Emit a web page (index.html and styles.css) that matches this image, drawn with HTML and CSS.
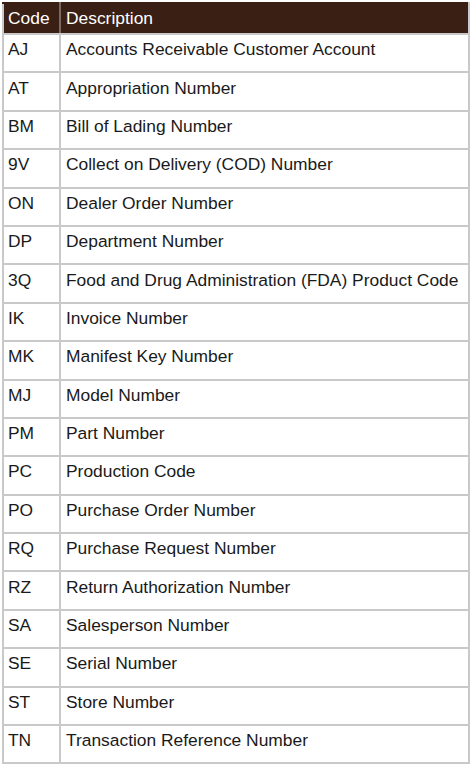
FILE: index.html
```html
<!DOCTYPE html>
<html>
<head>
<meta charset="utf-8">
<link rel="stylesheet" href="styles.css">
</head>
<body>
<table class="codes">
<thead>
<tr><th class="c">Code</th><th class="d">Description</th></tr>
</thead>
<tbody>
<tr><td class="c">AJ</td><td class="d">Accounts Receivable Customer Account</td></tr>
<tr><td class="c">AT</td><td class="d">Appropriation Number</td></tr>
<tr><td class="c">BM</td><td class="d">Bill of Lading Number</td></tr>
<tr><td class="c">9V</td><td class="d">Collect on Delivery (COD) Number</td></tr>
<tr><td class="c">ON</td><td class="d">Dealer Order Number</td></tr>
<tr><td class="c">DP</td><td class="d">Department Number</td></tr>
<tr><td class="c">3Q</td><td class="d">Food and Drug Administration (FDA) Product Code</td></tr>
<tr><td class="c">IK</td><td class="d">Invoice Number</td></tr>
<tr><td class="c">MK</td><td class="d">Manifest Key Number</td></tr>
<tr><td class="c">MJ</td><td class="d">Model Number</td></tr>
<tr><td class="c">PM</td><td class="d">Part Number</td></tr>
<tr><td class="c">PC</td><td class="d">Production Code</td></tr>
<tr><td class="c">PO</td><td class="d">Purchase Order Number</td></tr>
<tr><td class="c">RQ</td><td class="d">Purchase Request Number</td></tr>
<tr><td class="c">RZ</td><td class="d">Return Authorization Number</td></tr>
<tr><td class="c">SA</td><td class="d">Salesperson Number</td></tr>
<tr><td class="c">SE</td><td class="d">Serial Number</td></tr>
<tr><td class="c">ST</td><td class="d">Store Number</td></tr>
<tr><td class="c">TN</td><td class="d">Transaction Reference Number</td></tr>
</tbody>
</table>
</body>
</html>
```
FILE: styles.css
```css
html, body {
  margin: 0;
  padding: 0;
  background: #ffffff;
}
body {
  padding: 2px 0 0 2px;
  font-family: "Liberation Sans", Arial, sans-serif;
  color: #1a1a1a;
}
.codes {
  border-collapse: collapse;
  width: 468px;
  border: 2px solid #c9c9c9;
  font-size: 17.4px;
}
.codes th, .codes td {
  border: 2px solid #c9c9c9;
  text-align: left;
  white-space: nowrap;
}
.codes thead th {
  background: #3a1f15;
  color: #ffffff;
  font-weight: normal;
  height: 28px;
  padding: 0 0 1px 4px;
  border-color: #3a1f15 #c9c9c9 #c9c9c9 #c9c9c9;
}
.codes thead th.c {
  border-right-color: #7a6a64;
}
.codes td {
  height: 29.4px;
  padding: 0 0 7px 4px;
}
.codes td.d, .codes th.d {
  padding-left: 5px;
}
.codes .c {
  width: 51px;
}
```
